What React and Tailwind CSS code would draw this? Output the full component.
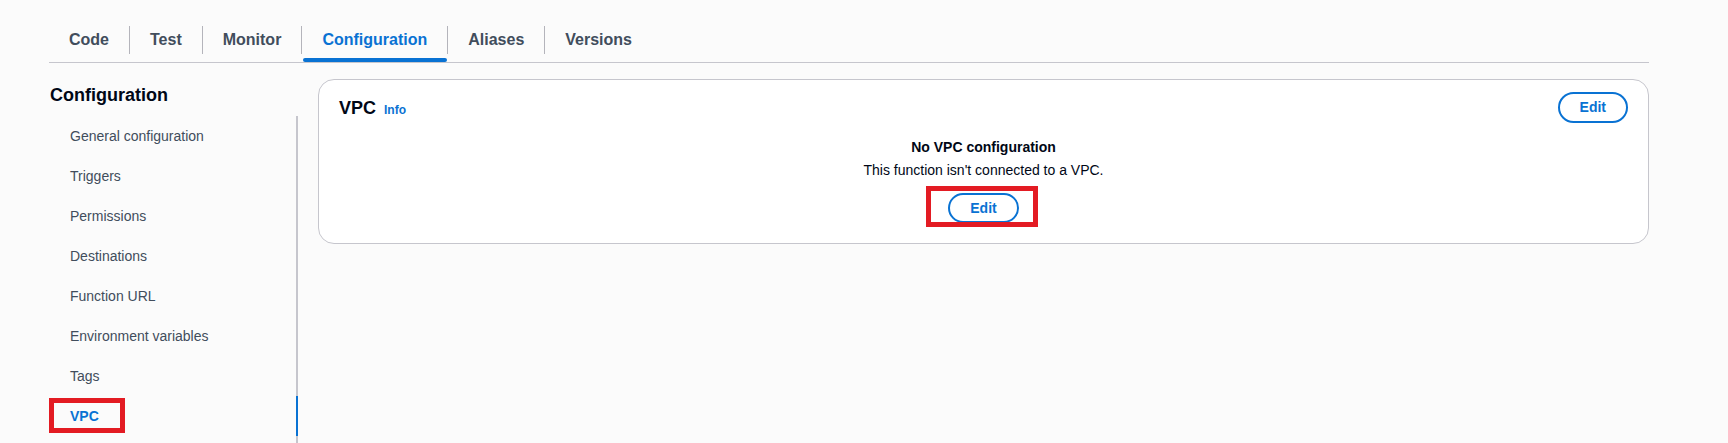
const tabs = ["Code", "Test", "Monitor", "Configuration", "Aliases", "Versions"];
const navItems = [
  "General configuration",
  "Triggers",
  "Permissions",
  "Destinations",
  "Function URL",
  "Environment variables",
  "Tags",
  "VPC",
];
const active = "VPC";

const Tabs = () => (
  <div className="flex h-[45px] border-b border-[#c6c6cd]">
    {tabs.map((t, i) => (
      <div key={t} className="flex items-center">
        {i > 0 && <div className="w-px h-[28px] bg-[#b4b4bb]" />}
        <div
          className={`relative h-full flex items-center px-5 text-[16px] font-bold ${
            t === "Configuration" ? "text-[#0972d3]" : "text-[#414d5c]"
          }`}
        >
          {t}
          {t === "Configuration" && (
            <div className="absolute left-px right-0 bottom-0 h-[4px] rounded-full bg-[#0972d3]" />
          )}
        </div>
      </div>
    ))}
  </div>
);

const Sidebar = () => (
  <div className="w-[249px] shrink-0">
    <h2 className="pt-[5px] mb-[10px] pl-px text-[18px] leading-[22px] font-bold text-[#000716]">Configuration</h2>
    <ul>
      {navItems.map((item) => {
        const isActive = item === active;
        return (
          <li
            key={item}
            className={`relative h-[40px] flex items-center pl-[21px] text-[14px] border-r-2 ${
              isActive ? "border-[#0972d3] text-[#0972d3] font-bold" : "border-[#c6c6cd] text-[#414d5c]"
            }`}
          >
            {item}
            {/* annotation box */}
            {isActive && (
              <div className="absolute left-0 top-[2px] w-[76px] h-[35px] border-[5px] border-[#e31b23]" />
            )}
          </li>
        );
      })}
      {/* rest of the nav rail, below the fold */}
      <li className="h-[40px] border-r-2 border-[#c6c6cd]" />
    </ul>
  </div>
);

const EditButton = ({ h }) => (
  <button
    className={`${h} px-5 rounded-full border-2 border-[#0972d3] bg-white text-[14px] font-bold text-[#0972d3] flex items-center`}
  >
    Edit
  </button>
);

const VpcCard = () => (
  <div className="flex-1 self-start rounded-[16px] border border-[#c6c6cd] bg-white px-5 pt-[12px] pb-[20px]">
    <div className="flex items-center justify-between h-[31px]">
      <div className="flex items-baseline gap-2">
        <h2 className="text-[18px] leading-[22px] font-bold text-[#000716]">VPC</h2>
        <span className="text-[12px] font-bold text-[#0972d3]">Info</span>
      </div>
      <EditButton h="h-[31px]" />
    </div>
    <div className="flex flex-col items-center mt-[13px] text-[14px] leading-[23px] text-[#000716]">
      <p className="font-bold">No VPC configuration</p>
      <p>This function isn't connected to a VPC.</p>
      <div className="relative mt-[11px]">
        <EditButton h="h-[30px]" />
        <div className="absolute -left-[22px] -top-[7px] w-[112px] h-[41px] border-[5px] border-[#e31b23]" />
      </div>
    </div>
  </div>
);

export default function App() {
  return (
    <div className="h-[443px] overflow-hidden bg-[#fbfbfb] font-['Liberation_Sans',Arial,sans-serif]">
      <div className="pl-[49px] pt-[18px] w-[1649px]">
        <Tabs />
        <div className="flex gap-5 mt-4">
          <Sidebar />
          <VpcCard />
        </div>
      </div>
    </div>
  );
}
